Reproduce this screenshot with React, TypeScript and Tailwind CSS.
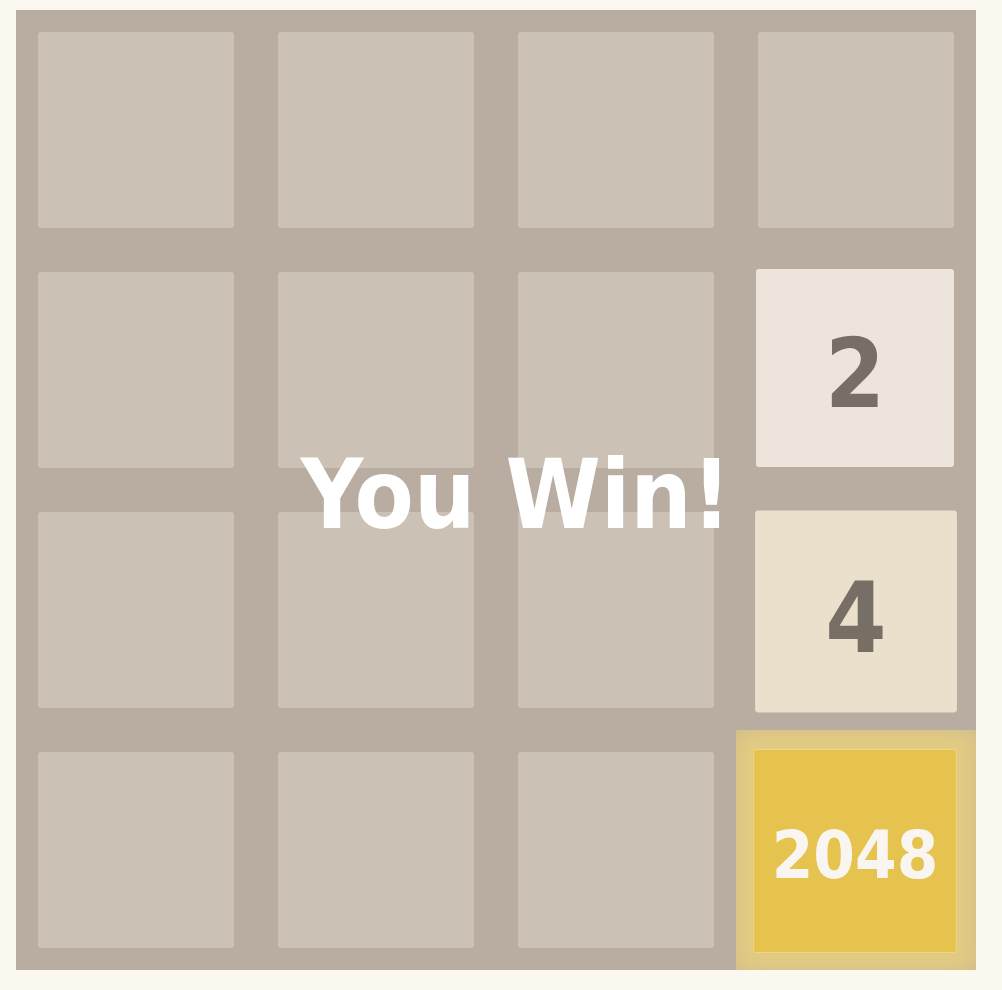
import React from "react";

type Cell = { value?: number };

const rows: Cell[][] = [
  [{}, {}, {}, {}],
  [{}, {}, {}, { value: 2 }],
  [{}, {}, {}, { value: 4 }],
  [{}, {}, {}, { value: 2048 }],
];

const gameFont = { fontFamily: '"DejaVu Sans Condensed", "DejaVu Sans", sans-serif' };

function Tile({ value }: { value: number }) {
  if (value === 2) {
    return (
      <div
        className="w-[196px] h-[196px] pt-[12px] rounded-[3px] bg-[#ede5dc] text-[#776e65] font-bold text-[95px] leading-none flex items-center justify-center scale-[1.01] -translate-x-[1px] -translate-y-[2px]"
        style={gameFont}
      >
        2
      </div>
    );
  }
  if (value === 4) {
    return (
      <div
        className="w-[196px] h-[196px] pt-[12px] rounded-[3px] bg-[#ebe0cb] text-[#776e65] font-bold text-[95px] leading-none flex items-center justify-center scale-[1.03] translate-y-[1.5px]"
        style={gameFont}
      >
        4
      </div>
    );
  }
  // the winning tile glows, and its glow is clipped to the cell's share of the board
  return (
    <div className="-m-[22px] w-[240px] h-[240px] overflow-hidden flex items-center justify-center">
      <div
        className="w-[196px] h-[196px] pt-[7px] rounded-[3px] bg-[#e6c24e] text-[#f9f6f2] font-bold text-[64px] leading-none flex items-center justify-center scale-[1.04] -translate-x-[1px] translate-y-[1px] shadow-[0_0_30px_28px_rgba(243,215,116,0.72),inset_0_0_0_1px_rgba(255,255,255,0.33)]"
        style={gameFont}
      >
        2048
      </div>
    </div>
  );
}

export default function App() {
  return (
    <div className="min-h-[990px] bg-[#faf8ef] pt-[10px] pl-[16px]">
      <div className="relative w-[960px] h-[960px] bg-[#b9ada1] p-[22px] grid grid-cols-[repeat(4,196px)] auto-rows-[196px] gap-[44px]">
        {rows.flatMap((row, r) =>
          row.map((cell, c) => (
            <div key={`${r}-${c}`} className="relative w-[196px] h-[196px]">
              {cell.value ? (
                <Tile value={cell.value} />
              ) : (
                <div className="w-full h-full rounded-[3px] bg-[#cbc1b5]" />
              )}
            </div>
          ))
        )}
        <div className="absolute inset-0 flex items-center justify-center pointer-events-none">
          <p
            className="text-white font-bold text-[96px] leading-none translate-x-[20px] translate-y-[5px]"
            style={gameFont}
          >
            You Win!
          </p>
        </div>
      </div>
    </div>
  );
}
